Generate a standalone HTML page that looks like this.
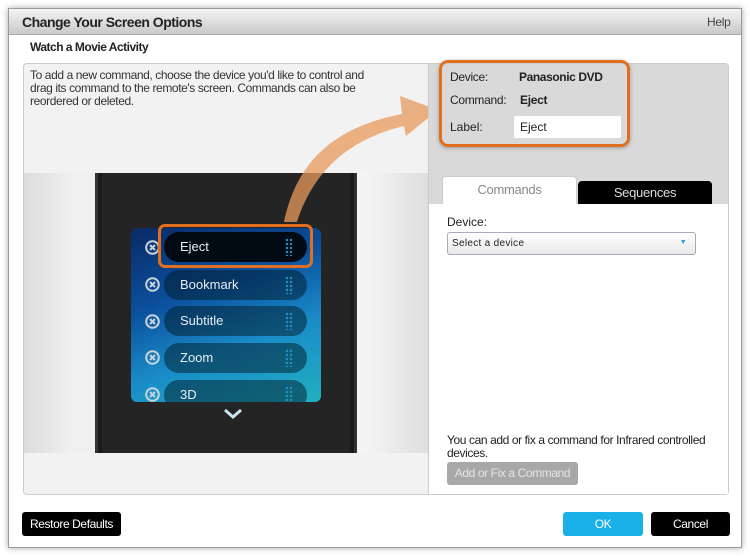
<!DOCTYPE html>
<html><head><style>
*{box-sizing:border-box;margin:0;padding:0}
body{width:750px;height:556px;background:#fff;font-family:"Liberation Sans",sans-serif;position:relative;overflow:hidden;font-size:12px;color:#222}
.a{position:absolute}
.dlg{left:8px;top:8px;width:734px;height:540px;border:1px solid #9a9a9a;background:#fff;box-shadow:0 0 6px rgba(0,0,0,.35)}
.title{left:9px;top:9px;width:732px;height:26px;background:linear-gradient(#f4f4f4,#c9c9c9);border-bottom:1px solid #aaa}
.btn{position:absolute;height:24px;border-radius:3px;color:#fff;font-size:12px;text-align:center;line-height:24px;letter-spacing:-.4px}
.pill{position:absolute;left:164px;width:143px;height:30px;border-radius:15px;background:rgba(0,25,40,.5);color:#e8eef2;font-size:13px;line-height:30px;padding-left:16px}
.dots{position:absolute;right:14px;top:6px;width:8px;height:18px;background:radial-gradient(circle,#1e8fc0 1.1px,transparent 1.4px) 0 0/4px 4px}
.x{position:absolute;left:145px;width:15px;height:15px}
</style></head><body>
<div class="a dlg"></div>
<div class="a title"></div>
<div class="a" style="left:22px;top:14px;font-size:14px;font-weight:bold;letter-spacing:-.5px">Change Your Screen Options</div>
<div class="a" style="left:707px;top:15px;font-size:12px;color:#444;letter-spacing:-.3px">Help</div>
<div class="a" style="left:30px;top:40px;font-size:12px;font-weight:bold;letter-spacing:-.5px">Watch a Movie Activity</div>
<div class="a" style="left:23px;top:63px;width:706px;height:432px;border:1px solid #ccc;border-radius:4px;background:#f2f2f2"></div>
<div class="a" style="left:30px;top:69px;width:350px;font-size:12px;line-height:13px;color:#333;letter-spacing:-.4px">To add a new command, choose the device you'd like to control and drag its command to the remote's screen. Commands can also be reordered or deleted.</div>
<div class="a" style="left:24px;top:173px;width:404px;height:280px;background:linear-gradient(90deg,#dcdcdc,#f0f0f0 12%,#f4f4f4 85%,#dedede)"></div>
<div class="a" style="left:95px;top:173px;width:262px;height:280px;background:#1a1a1a;border-left:3px solid #333;border-right:3px solid #333"></div>
<div class="a" style="left:102px;top:173px;width:248px;height:280px;background:#242424"></div>
<div class="a" style="left:131px;top:228px;width:190px;height:174px;border-radius:6px;background:linear-gradient(160deg,#0a2a66 0%,#0b4f9c 35%,#1a8cc8 65%,#20b0c0 100%)"></div>
<div class="pill" style="top:232px;background:#020a14">Eject<div class="dots"></div></div>
<div class="pill" style="top:270px">Bookmark<div class="dots"></div></div>
<div class="pill" style="top:306px">Subtitle<div class="dots"></div></div>
<div class="pill" style="top:343px">Zoom<div class="dots"></div></div>
<div class="a" style="left:131px;top:380px;width:190px;height:22px;overflow:hidden"><div class="pill" style="top:0;left:33px;height:30px">3D<div class="dots"></div></div></div>
<svg class="a" style="left:0;top:0" width="750" height="556">
<defs><g id="xi"><circle cx="7.5" cy="7.5" r="6.3" stroke="#c8d4dc" stroke-width="2" fill="none"/><path d="M5 5 L10 10 M10 5 L5 10" stroke="#c8d4dc" stroke-width="2"/></g></defs>
<use href="#xi" x="145" y="240"/><use href="#xi" x="145" y="277"/><use href="#xi" x="145" y="314"/><use href="#xi" x="145" y="350"/><use href="#xi" x="145" y="387"/>
<path d="M225 410 l8 7 l8 -7" stroke="#c8e4ee" stroke-width="3" fill="none"/>
<path d="M284 222 C296 165 330 128 402 114 L400 96 L438 110 L406 136 L404 126 C345 140 312 175 297 222 Z" fill="#e89a5c" opacity=".75"/>
</svg>
<div class="a" style="left:158px;top:224px;width:155px;height:44px;border:3px solid #e07020;border-radius:7px"></div>
<div class="a" style="left:428px;top:64px;width:300px;height:430px;background:#fff;border-left:1px solid #ccc"></div>
<div class="a" style="left:429px;top:64px;width:299px;height:140px;background:#d9d9d9"></div>
<div class="a" style="left:450px;top:70px;font-size:12px;letter-spacing:-.3px">Device:</div>
<div class="a" style="left:519px;top:70px;font-size:12px;font-weight:bold;letter-spacing:-.4px">Panasonic DVD</div>
<div class="a" style="left:450px;top:93px;font-size:12px;letter-spacing:-.3px">Command:</div>
<div class="a" style="left:520px;top:93px;font-size:12px;font-weight:bold;letter-spacing:-.3px">Eject</div>
<div class="a" style="left:450px;top:120px;font-size:12px">Label:</div>
<div class="a" style="left:514px;top:116px;width:107px;height:22px;background:#fff;border-radius:2px;padding:4px 6px;font-size:12px">Eject</div>
<div class="a" style="left:439px;top:60px;width:191px;height:87px;border:3px solid #e07020;border-radius:9px;box-shadow:0 1px 4px rgba(0,0,0,.3)"></div>
<div class="a" style="left:442px;top:176px;width:135px;height:28px;background:#fff;border:1px solid #ccc;border-bottom:none;border-radius:4px 4px 0 0;text-align:center;line-height:26px;color:#888;font-size:13px;letter-spacing:-.3px">Commands</div>
<div class="a" style="left:578px;top:181px;width:134px;height:23px;background:#000;border-radius:4px 4px 0 0;text-align:center;line-height:23px;color:#ddd;font-size:13px;letter-spacing:-.3px">Sequences</div>
<div class="a" style="left:447px;top:215px;font-size:12px">Device:</div>
<div class="a" style="left:447px;top:232px;width:249px;height:23px;border:1px solid #aab;border-radius:3px;background:linear-gradient(#fff,#e8e8e8);font-size:10px;padding:5px 4px;letter-spacing:.3px">Select a device<span style="position:absolute;right:8px;top:6px;color:#2a9ad0;font-size:7px">▼</span></div>
<div class="a" style="left:447px;top:434px;width:275px;font-size:12px;line-height:13px;letter-spacing:-.4px">You can add or fix a command for Infrared controlled devices.</div>
<div class="btn" style="left:447px;top:462px;width:131px;height:23px;background:#a8a8a8;color:#e4e4e4;line-height:23px">Add or Fix a Command</div>
<div class="btn" style="left:22px;top:512px;width:99px;background:#000">Restore Defaults</div>
<div class="btn" style="left:563px;top:512px;width:80px;background:#1ab0e8">OK</div>
<div class="btn" style="left:651px;top:512px;width:79px;background:#000">Cancel</div>
</body></html>
